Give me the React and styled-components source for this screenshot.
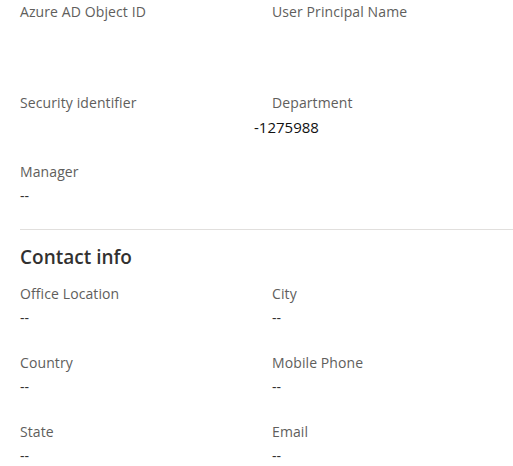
import React from 'react';
import styled, {createGlobalStyle} from 'styled-components';

const Global = createGlobalStyle`
  body {
    margin: 0;
    background: #ffffff;
    font-family: "Open Sans", "Noto Sans", sans-serif;
  }
`;

const Wrapper = styled.div`
  padding: 2px 0 0 20px;
`;

const Grid = styled.div`
  display: grid;
  grid-template-columns: 252px 1fr;
  row-gap: ${props => props.gap || 25}px;
`;

const Field = styled.div`
  display: flex;
  flex-direction: column;
  min-width: 0;
`;

const Label = styled.div`
  font-size: 14px;
  line-height: 20px;
  color: #605e5c;
  letter-spacing: 0.1px;
  white-space: nowrap;
`;

const Value = styled.div`
  margin-top: 4px;
  font-size: ${props => props.strong ? 15 : 14}px;
  line-height: 20px;
  min-height: ${props => props.tall ? 42 : 20}px;
  color: ${props => props.strong ? '#111111' : '#323130'};
  margin-left: ${props => props.shift || 0}px;
  white-space: nowrap;
`;

const Divider = styled.hr`
  border: 0;
  border-top: 1px solid #e1dfdd;
  margin: 23px 0 13px 0;
`;

const Heading = styled.h2`
  margin: 0 0 13px 0;
  font-size: 19px;
  line-height: 28px;
  font-weight: 600;
  color: #323130;
`;

const identity = [
  {label: 'Azure AD Object ID', value: '', tall: true},
  {label: 'User Principal Name', value: '', tall: true},
  {label: 'Security identifier', value: ''},
  {label: 'Department', value: '-1275988', shift: -18, strong: true},
  {label: 'Manager', value: '--'},
];

const contact = [
  {label: 'Office Location', value: '--'},
  {label: 'City', value: '--'},
  {label: 'Country', value: '--'},
  {label: 'Mobile Phone', value: '--'},
  {label: 'State', value: '--'},
  {label: 'Email', value: '--'},
];

const renderFields = list =>
  list.map(f => (
    <Field key={f.label}>
      <Label>{f.label}</Label>
      <Value tall={f.tall} shift={f.shift} strong={f.strong}>{f.value}</Value>
    </Field>
  ));

export default function App() {
  return (
    <Wrapper>
      <Global />
      <Grid>{renderFields(identity)}</Grid>
      <Divider />
      <Heading>Contact info</Heading>
      <Grid gap={25}>{renderFields(contact)}</Grid>
    </Wrapper>
  );
}
